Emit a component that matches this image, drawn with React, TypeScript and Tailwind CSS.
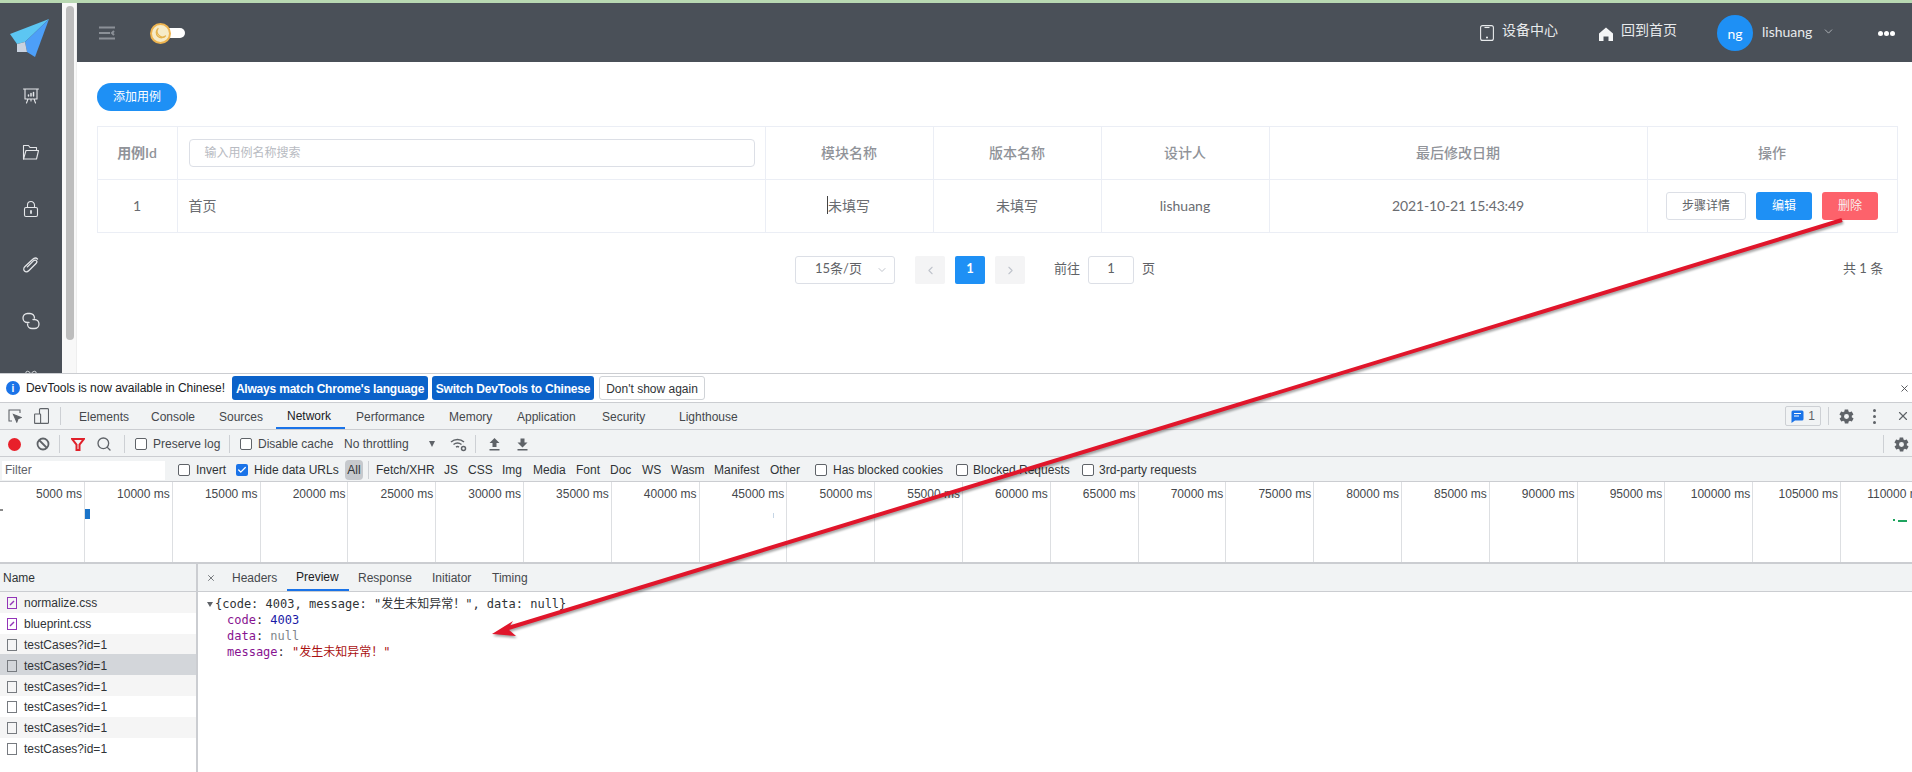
import { Check, ChevronDown, ChevronLeft, ChevronRight, Gift, Search, X } from "lucide-react";

const devFont = "font-['Liberation_Sans',Arial,sans-serif]";
const appFont = "font-['Lato','Noto_Sans_CJK_SC',sans-serif]";

const devTabs = [
  { label: "Elements", width: "w-[72px]" },
  { label: "Console", width: "w-[68px]" },
  { label: "Sources", width: "w-[68px]" },
  { label: "Network", width: "w-[69px]", active: true },
  { label: "Performance", width: "w-[93px]" },
  { label: "Memory", width: "w-[68px]" },
  { label: "Application", width: "w-[85px]" },
  { label: "Security", width: "w-[77px]" },
  { label: "Lighthouse", width: "w-[90px]" },
];

const filterTypes = [
  { label: "Fetch/XHR", width: "w-[68px]" },
  { label: "JS", width: "w-[24px]" },
  { label: "CSS", width: "w-[34px]" },
  { label: "Img", width: "w-[31px]" },
  { label: "Media", width: "w-[43px]" },
  { label: "Font", width: "w-[34px]" },
  { label: "Doc", width: "w-[32px]" },
  { label: "WS", width: "w-[29px]" },
  { label: "Wasm", width: "w-[43px]" },
  { label: "Manifest", width: "w-[56px]" },
  { label: "Other", width: "w-[45px]" },
];

const ticks = [
  "5000", "10000", "15000", "20000", "25000", "30000", "35000", "40000", "45000", "50000", "55000",
  "60000", "65000", "70000", "75000", "80000", "85000", "90000", "95000", "100000", "105000", "110000",
];

const requests = [
  { name: "normalize.css", css: true, bg: "bg-[#f5f5f5]" },
  { name: "blueprint.css", css: true, bg: "bg-white" },
  { name: "testCases?id=1", bg: "bg-[#f5f5f5]" },
  { name: "testCases?id=1", bg: "bg-[#d3d6da]" },
  { name: "testCases?id=1", bg: "bg-[#f5f5f5]" },
  { name: "testCases?id=1", bg: "bg-white" },
  { name: "testCases?id=1", bg: "bg-[#f5f5f5]" },
  { name: "testCases?id=1", bg: "bg-white" },
];

function Logo() {
  return (
    <svg width="42" height="42" viewBox="1 0 42 42">
      <path d="M1 17 L40 2 L16 25 L8 27 Z" fill="#5cc6f2" />
      <path d="M40 2 L16 25 L18 35 L26 40 Z" fill="#4d9ff8" />
      <path d="M8 27 L16 25 L18 35 L8 35 Z" fill="#c9d2df" />
    </svg>
  );
}

function SideIcon({ children }: { children: React.ReactNode }) {
  return (
    <div className="h-[56.3px] shrink-0 flex items-center justify-center">
      <svg width="18" height="18" viewBox="0 0 18 18" fill="none" stroke="#e4e6e9" strokeWidth="1.1" strokeLinecap="round" strokeLinejoin="round">
        {children}
      </svg>
    </div>
  );
}

function DevCheckbox({ checked, className = "" }: { checked?: boolean; className?: string }) {
  return checked ? (
    <span className={`w-[12px] h-[12px] rounded-[2px] bg-[#1a73e8] flex items-center justify-center shrink-0 ${className}`}>
      <Check size={10} strokeWidth={3} color="white" />
    </span>
  ) : (
    <span className={`w-[12px] h-[12px] rounded-[2px] border border-[#5f6368] bg-white shrink-0 ${className}`} />
  );
}

function Sep({ className = "" }: { className?: string }) {
  return <span className={`w-px h-[18px] bg-[#cdd0d4] shrink-0 ${className}`} />;
}

function Gear({ className }: { className?: string }) {
  return (
    <svg className={className} width="17" height="17" viewBox="0 0 24 24" fill="#5f6368">
      <path d="M19.4 13c.1-.3.1-.7.1-1s0-.7-.1-1l2.1-1.6c.2-.2.2-.4.1-.6l-2-3.5c-.1-.2-.4-.3-.6-.2l-2.5 1c-.5-.4-1.1-.7-1.7-1l-.4-2.6c0-.3-.2-.4-.5-.4h-4c-.3 0-.5.2-.5.4l-.4 2.6c-.6.3-1.2.6-1.7 1l-2.5-1c-.2-.1-.5 0-.6.2l-2 3.5c-.1.2-.1.5.1.6L4.6 11c-.1.3-.1.7-.1 1s0 .7.1 1l-2.1 1.6c-.2.2-.2.4-.1.6l2 3.5c.1.2.4.3.6.2l2.5-1c.5.4 1.1.7 1.7 1l.4 2.6c0 .2.2.4.5.4h4c.3 0 .5-.2.5-.4l.4-2.6c.6-.3 1.2-.6 1.7-1l2.5 1c.2.1.5 0 .6-.2l2-3.5c.1-.2.1-.5-.1-.6L19.4 13zM12 15.5a3.5 3.5 0 1 1 0-7 3.5 3.5 0 0 1 0 7z" />
    </svg>
  );
}

function Sidebar() {
  return (
    <aside className="w-[62px] shrink-0 h-full bg-[#4a5058] flex flex-col items-center overflow-hidden">
      <div className="h-[65px] shrink-0 pt-[14px]">
        <Logo />
      </div>
      <SideIcon>
        <path d="M1.500 2h15M3 2v10h12V2M6 12l-1.500 4M12 12l1.500 4M9 12v2" />
        <path d="M6.500 9V8M9 9V6.500M11.500 9V5.500" strokeWidth="1.500" />
      </SideIcon>
      <SideIcon>
        <path d="M1.500 16V2.500h5l1.500 2h6.500v3" />
        <path d="M1.500 16l2.500-8.500h12.500l-2 8.500z" />
      </SideIcon>
      <SideIcon>
        <rect x="2.500" y="7.500" width="13" height="9" rx="1.500" />
        <path d="M5.500 7.500V5a3.500 3.500 0 0 1 7 0v2.500" />
        <path d="M9 11v2" strokeWidth="1.800" />
      </SideIcon>
      <SideIcon>
        <path d="M15.500 3c-1.500-1.500-3.500-1-5 .5L3 10.500c-1.500 1.500-1.500 3.500-.5 4.500s3 1 4.500-.5l7-7c1-1 1-2.200.3-2.900s-1.900-.7-2.900.3l-6 6" strokeWidth="1.300" />
      </SideIcon>
      <SideIcon>
        <path d="M7 10.500H5.500a4.500 4.500 0 0 1 0-9H8a4.500 4.500 0 0 1 4.500 4.500" strokeWidth="1.300" />
        <path d="M11 7.500h1.500a4.500 4.500 0 0 1 0 9H10A4.500 4.500 0 0 1 5.500 12" strokeWidth="1.300" />
      </SideIcon>
      <div className="h-[56.3px] shrink-0 flex items-center justify-center">
        <Gift size={18} color="#e4e6e9" strokeWidth={1.2} />
      </div>
    </aside>
  );
}

function Header() {
  return (
    <header className="h-[59px] shrink-0 bg-[#4a5058] flex items-center text-[#e8eaec] text-[14px] pt-px">
      <svg className="ml-[22px]" width="16" height="14" viewBox="0 0 16 14" fill="none" stroke="#8b9097" strokeWidth="2">
        <path d="M0 1.500h16M0 7h11M0 12.500h16M15 5l-2 2 2 2" />
      </svg>
      <div className="ml-[35px] relative w-[35px] h-[21px] flex items-center">
        <span className="ml-[8px] w-[27px] h-[10px] rounded-full bg-white" />
        <span className="absolute left-0 top-0 w-[21px] h-[21px] rounded-full bg-[#f6ecc9] border-2 border-[#eeb44f] flex items-center justify-center">
          <svg width="13" height="13" viewBox="0 0 12 12" fill="none" stroke="#e5b34e" strokeWidth="1">
            <path d="M4 1a5 5 0 1 0 7 7 5 5 0 0 1-7-7z" />
          </svg>
        </span>
      </div>
      <svg className="ml-[1295px] mb-[1px]" width="14" height="16" viewBox="0 0 14 16" fill="none" stroke="#e8eaec" strokeWidth="1.1">
        <rect x="0.600" y="0.600" width="12.800" height="14.800" rx="2" />
        <path d="M4.500 2.500h5" />
        <circle cx="7" cy="12.500" r="0.500" fill="#e8eaec" />
      </svg>
      <span className="ml-[8px] w-[56px] mb-[7px] leading-none whitespace-nowrap">设备中心</span>
      <svg className="ml-[41px] mb-[-2px]" width="14" height="14" viewBox="0 0 14 14" fill="#f4f5f6">
        <path d="M7 0.500L14 6.500V14H9.500V9.500h-5V14H0V6.500z" />
      </svg>
      <span className="ml-[8px] w-[56px] mb-[7px] leading-none whitespace-nowrap">回到首页</span>
      <span className="ml-[40px] w-[36px] h-[36px] rounded-full bg-[#1e90f5] flex items-center justify-center text-white">ng</span>
      <span className="ml-[9px] w-[52px] mb-[4px]">lishuang</span>
      <ChevronDown className="ml-[8px] mb-[4px]" size={13} color="#c8ccd0" strokeWidth={1.4} />
      <span className="ml-[43px] flex gap-[1px]">
        <i className="w-[5px] h-[5px] rounded-full bg-white" />
        <i className="w-[5px] h-[5px] rounded-full bg-white" />
        <i className="w-[5px] h-[5px] rounded-full bg-white" />
      </span>
    </header>
  );
}

function CasesTable() {
  const head = "border border-[#ebeef5] text-center text-[#909399] text-[14px] font-medium pb-[2px]";
  const cell = "border border-[#ebeef5] text-center text-[#6a6c71] text-[14px] pb-[2px]";
  return (
    <table className="ml-[19.500px] mt-[15px] w-[1800px] table-fixed border-collapse">
      <colgroup>
        <col className="w-[80px]" />
        <col className="w-[588px]" />
        <col className="w-[168px]" />
        <col className="w-[168px]" />
        <col className="w-[168px]" />
        <col className="w-[378px]" />
        <col className="w-[250px]" />
      </colgroup>
      <thead>
        <tr className="h-[53px]">
          <th className={`${head} font-semibold`}>用例Id</th>
          <th className="border border-[#ebeef5] px-[11px] font-normal">
            <div className="w-[566px] h-[28px] rounded-[4px] border border-[#dcdfe6] flex items-center pl-[15px] text-[12px] text-[#b8bbc2]">
              输入用例名称搜索
            </div>
          </th>
          <th className={head}>模块名称</th>
          <th className={head}>版本名称</th>
          <th className={head}>设计人</th>
          <th className={head}>最后修改日期</th>
          <th className={head}>操作</th>
        </tr>
      </thead>
      <tbody>
        <tr className="h-[53px]">
          <td className={cell}>1</td>
          <td className={`${cell} text-left! px-[11px]`}>首页</td>
          <td className={cell}>
            <span className="relative">
              <i className="absolute left-[-1px] top-[-1px] w-px h-[18px] bg-[#444]" />
              未填写
            </span>
          </td>
          <td className={cell}>未填写</td>
          <td className={cell}>lishuang</td>
          <td className={`${cell} tracking-[-0.15px]`}>2021-10-21 15:43:49</td>
          <td className="border border-[#ebeef5]">
            <div className="flex justify-center gap-[10px] text-[12px]">
              <span className="w-[80px] h-[28px] rounded-[3px] border border-[#dcdfe6] bg-white text-[#606266] flex items-center justify-center">步骤详情</span>
              <span className="w-[56px] h-[28px] rounded-[3px] bg-[#1e90f5] text-white flex items-center justify-center">编辑</span>
              <span className="w-[56px] h-[28px] rounded-[3px] bg-[#fd626b] text-[#f8f0f0] flex items-center justify-center">删除</span>
            </div>
          </td>
        </tr>
      </tbody>
    </table>
  );
}

function Pagination() {
  return (
    <div className="mt-[23px] h-[28px] flex items-center text-[13px] text-[#606266]">
      <div className="ml-[718px] w-[100px] h-[28px] rounded-[3px] border border-[#dcdfe6] flex items-center pl-[19px] pb-[2px] whitespace-nowrap">
        15条/页
        <ChevronDown className="ml-[14px] mt-[2px]" size={12} color="#c0c4cc" />
      </div>
      <span className="ml-[20px] w-[30px] h-[28px] rounded-[2px] bg-[#f4f4f5] flex items-center justify-center">
        <ChevronLeft size={13} color="#c0c4cc" />
      </span>
      <span className="ml-[10px] w-[30px] h-[28px] rounded-[2px] bg-[#1e90f5] text-white font-bold flex items-center justify-center pb-[2px]">1</span>
      <span className="ml-[10px] w-[30px] h-[28px] rounded-[2px] bg-[#f4f4f5] flex items-center justify-center">
        <ChevronRight size={13} color="#c0c4cc" />
      </span>
      <span className="ml-[29px] w-[26px] pb-[2px] whitespace-nowrap">前往</span>
      <span className="ml-[8px] w-[46px] h-[28px] rounded-[3px] border border-[#dcdfe6] flex items-center justify-center pb-[2px]">1</span>
      <span className="ml-[8px] pb-[2px]">页</span>
      <span className="ml-[688px] pb-[2px] whitespace-nowrap">共 1 条</span>
    </div>
  );
}

function AppArea() {
  return (
    <div className={`h-[370px] shrink-0 flex overflow-hidden ${appFont}`}>
      <Sidebar />
      <div className="w-[15px] shrink-0 bg-[#f8f8f8] border-r border-[#eeeeee] pt-[3px] pl-[4px]">
        <div className="w-[8px] h-[334px] rounded-full bg-[#bdbdbd]" />
      </div>
      <main className="flex-1 min-w-0 flex flex-col bg-white">
        <Header />
        <button className="ml-[20px] mt-[21px] w-[80px] h-[28px] rounded-full bg-[#1e90f5] text-white text-[12px]">添加用例</button>
        <CasesTable />
        <Pagination />
      </main>
    </div>
  );
}

function InfoBar() {
  return (
    <div className="h-[30px] shrink-0 border-t border-b border-[#cbcdd1] bg-white flex items-center text-[12px] text-[#202124]">
      <span className="ml-[6px] w-[14px] h-[14px] rounded-full bg-[#1a73e8] text-white text-[10px] font-bold flex items-center justify-center">i</span>
      <span className="ml-[6px] w-[206px] whitespace-nowrap tracking-[-0.05px]">DevTools is now available in Chinese!</span>
      <span className="w-[196px] h-[24px] rounded-[3px] bg-[#0b62c9] text-white font-bold pt-[2px] tracking-[-0.2px] flex items-center justify-center whitespace-nowrap">Always match Chrome's language</span>
      <span className="ml-[4px] w-[162px] h-[24px] rounded-[3px] bg-[#0b62c9] text-white font-bold pt-[2px] tracking-[-0.2px] flex items-center justify-center whitespace-nowrap">Switch DevTools to Chinese</span>
      <span className="ml-[5px] w-[106px] h-[24px] rounded-[3px] border border-[#d0d3d7] text-[#303336] pt-[2px] flex items-center justify-center whitespace-nowrap">Don't show again</span>
      <X className="ml-auto mr-[2px]" size={11} color="#4a4d51" />
    </div>
  );
}

function TabBar() {
  return (
    <div className="h-[27px] shrink-0 bg-[#f1f3f4] border-b border-[#cbcdd1] flex items-center text-[12px] text-[#45484c]">
      <svg className="ml-[8px]" width="14" height="14" viewBox="0 0 14 14" fill="none" stroke="#5f6368" strokeWidth="1.100">
        <path d="M4 12H1V1h11v3" />
        <path d="M5.500 5.500l7.500 3-3 1.200-1.200 3.300z" fill="#5f6368" />
      </svg>
      <svg className="ml-[12px]" width="15" height="16" viewBox="0 0 15 16" fill="none" stroke="#5f6368" strokeWidth="1.100">
        <rect x="5.500" y="0.600" width="9" height="14.800" rx="1" />
        <rect x="0.600" y="6" width="6" height="9.400" rx="0.500" fill="#f1f3f4" />
      </svg>
      <Sep className="ml-[11px] mr-[7px]" />
      {devTabs.map((tab) => (
        <span
          key={tab.label}
          className={`${tab.width} h-full pl-[11px] pt-[2px] flex items-center whitespace-nowrap ${tab.active ? "border-b-2 border-[#1a73e8] text-[#202124]" : ""}`}
        >
          {tab.label}
        </span>
      ))}
      <span className="ml-auto w-[36px] h-[20px] rounded-[2px] border border-[#cdd0d4] flex items-center justify-center gap-[4px] text-[#5f6368]">
        <svg width="13" height="13" viewBox="0 0 13 13">
          <path d="M2 0.500h9a1.500 1.500 0 0 1 1.500 1.500v7A1.500 1.500 0 0 1 11 10.500H4L0.500 13V2A1.500 1.500 0 0 1 2 0.500z" fill="#1a73e8" />
          <path d="M3 3.500h7M3 6h5" stroke="white" />
        </svg>
        1
      </span>
      <Sep className="ml-[7px]" />
      <Gear className="ml-[9px]" />
      <span className="ml-[18px] flex flex-col gap-[3px]">
        <i className="w-[3px] h-[3px] rounded-full bg-[#5f6368]" />
        <i className="w-[3px] h-[3px] rounded-full bg-[#5f6368]" />
        <i className="w-[3px] h-[3px] rounded-full bg-[#5f6368]" />
      </span>
      <X className="ml-[20px] mr-[2px]" size={14} color="#5f6368" />
    </div>
  );
}

function NetworkToolbar() {
  return (
    <div className="h-[27px] shrink-0 bg-[#f1f3f4] border-b border-[#cbcdd1] pt-[2px] flex items-center text-[12px] text-[#45484c]">
      <span className="ml-[8px] w-[13px] h-[13px] rounded-full bg-[#e8202a]" />
      <svg className="ml-[15px]" width="14" height="14" viewBox="0 0 14 14" fill="none" stroke="#5f6368" strokeWidth="1.800">
        <circle cx="7" cy="7" r="5.500" />
        <path d="M3 3l8 8" />
      </svg>
      <Sep className="ml-[9px]" />
      <svg className="ml-[11px]" width="14" height="13" viewBox="0 0 14 13" fill="none" stroke="#e0202a" strokeWidth="2">
        <path d="M1 1h12L8.500 6.500V12h-3V6.500z" />
      </svg>
      <Search className="ml-[11px]" size={16} color="#5f6368" />
      <Sep className="ml-[12px]" />
      <DevCheckbox className="ml-[10px]" />
      <span className="ml-[6px] w-[76px] whitespace-nowrap">Preserve log</span>
      <Sep />
      <DevCheckbox className="ml-[10px]" />
      <span className="ml-[6px] w-[86px] whitespace-nowrap">Disable cache</span>
      <span className="w-[66px] whitespace-nowrap">No throttling</span>
      <span className="ml-[19px] w-0 h-0 border-x-[3.500px] border-x-transparent border-t-[6px] border-t-[#5f6368]" />
      <svg className="ml-[15px]" width="17" height="15" viewBox="0 0 17 15" fill="none" stroke="#5f6368" strokeWidth="1.500">
        <path d="M1 5a10 10 0 0 1 13 0M3.500 7.500a6.500 6.500 0 0 1 8 0M6 10a3 3 0 0 1 3 0" />
        <circle cx="13.500" cy="11.500" r="2" />
      </svg>
      <Sep className="ml-[8px]" />
      <svg className="ml-[13px]" width="11" height="13" viewBox="0 0 11 13" fill="#5f6368">
        <path d="M5.500 0L10.500 5H7.500V9H3.500V5H0.500z" />
        <rect x="0.500" y="11" width="10" height="1.500" />
      </svg>
      <svg className="ml-[17px]" width="11" height="13" viewBox="0 0 11 13" fill="#5f6368">
        <path d="M5.500 9.500L0.500 4.500H3.500V0.500H7.500V4.500H10.500z" />
        <rect x="0.500" y="11" width="10" height="1.500" />
      </svg>
      <Sep className="ml-auto" />
      <Gear className="ml-[9px] mr-[2px]" />
    </div>
  );
}

function FilterBar() {
  return (
    <div className="h-[25px] shrink-0 bg-[#f1f3f4] border-b border-[#cbcdd1] pt-[2px] flex items-center text-[12px] text-[#303336]">
      <span className="ml-[2px] w-[163px] h-[19px] bg-white pl-[3px] flex items-center text-[#5f6368]">Filter</span>
      <DevCheckbox className="ml-[13px]" />
      <span className="ml-[6px] w-[40px]">Invert</span>
      <DevCheckbox checked />
      <span className="ml-[6px] w-[91px] whitespace-nowrap">Hide data URLs</span>
      <span className="w-[18px] h-[20px] rounded-[4px] bg-[#c6c9cd] flex items-center justify-center">All</span>
      <Sep className="ml-[5px] mr-[7px]" />
      {filterTypes.map((type) => (
        <span key={type.label} className={`${type.width} whitespace-nowrap`}>{type.label}</span>
      ))}
      <DevCheckbox />
      <span className="ml-[6px] w-[123px] whitespace-nowrap">Has blocked cookies</span>
      <DevCheckbox />
      <span className="ml-[5px] w-[109px] whitespace-nowrap">Blocked Requests</span>
      <DevCheckbox />
      <span className="ml-[5px] whitespace-nowrap">3rd-party requests</span>
    </div>
  );
}

function Timeline() {
  return (
    <div className="relative h-[81px] shrink-0 bg-white border-b border-[#cbcdd1] flex overflow-hidden text-[12px] text-[#45484c]">
      <div className="w-[85px] shrink-0 border-r border-[#dddfe2] text-right pr-[2px] pt-[3px]">5000 ms</div>
      {ticks.slice(1).map((tick) => (
        <div key={tick} className="w-[87.8px] shrink-0 border-r border-[#dddfe2] text-right pr-[2px] pt-[3px] whitespace-nowrap">
          {tick} ms
        </div>
      ))}
      <i className="absolute left-0 top-[27px] w-[3px] h-[2px] bg-[#8a8a8a]" />
      <i className="absolute left-[85px] top-[27px] w-[5px] h-[10px] bg-[#1a73c8]" />
      <i className="absolute left-[773px] top-[31px] w-px h-[5px] bg-[#c5d5e5]" />
      <i className="absolute left-[1898px] top-[38px] w-[9px] h-[2px] bg-[#1fa45f]" />
      <i className="absolute left-[1893px] top-[37px] w-[2px] h-[2px] bg-[#1fa45f]" />
    </div>
  );
}

function RequestList() {
  return (
    <div className="w-[198px] shrink-0 h-full border-r-2 border-[#cbcdd1] text-[12px] text-[#303336] overflow-hidden">
      <div className="h-[28px] bg-[#f1f3f4] border-b border-[#cbcdd1] flex items-center pl-[3px]">Name</div>
      {requests.map((request, i) => (
        <div key={i} className={`h-[20.8px] pt-[2px] flex items-center pl-[7px] ${request.bg}`}>
          <span className={`w-[10px] h-[12px] border shrink-0 flex items-center justify-center ${request.css ? "border-[#9334b8]" : "border-[#777b80]"}`}>
            {request.css && (
              <svg width="6" height="6" viewBox="0 0 6 6">
                <path d="M1 5l4-4" stroke="#9334b8" strokeWidth="1.500" />
              </svg>
            )}
          </span>
          <span className="ml-[7px] whitespace-nowrap">{request.name}</span>
        </div>
      ))}
    </div>
  );
}

function PreviewPane() {
  return (
    <div className="flex-1 min-w-0 h-full bg-white">
      <div className="h-[28px] bg-[#f1f3f4] border-b border-[#cbcdd1] flex items-center text-[12px] text-[#45484c]">
        <X className="ml-[8px]" size={10} color="#5f6368" />
        <span className="ml-[16px] w-[55px]">Headers</span>
        <span className="w-[62px] h-full pl-[9px] flex items-center border-b-2 border-[#1a73e8] text-[#202124]">Preview</span>
        <span className="ml-[9px] w-[74px]">Response</span>
        <span className="w-[60px]">Initiator</span>
        <span>Timing</span>
      </div>
      <div className="pt-[4px] pl-[9px] font-['DejaVu_Sans_Mono','Noto_Sans_CJK_SC',monospace] text-[12px] leading-[16px] text-[#303336]">
        <div className="flex items-center">
          <span className="w-0 h-0 border-x-[3px] border-x-transparent border-t-[5px] border-t-[#5f6368] mr-[2px]" />
          <span className="whitespace-nowrap">{'{code: 4003, message: "发生未知异常！", data: null}'}</span>
        </div>
        <div className="pl-[20px]">
          <span className="text-[#881391]">code</span>: <span className="text-[#1a1aa6]">4003</span>
        </div>
        <div className="pl-[20px]">
          <span className="text-[#881391]">data</span>: <span className="text-[#80868b]">null</span>
        </div>
        <div className="pl-[20px] whitespace-nowrap">
          <span className="text-[#881391]">message</span>: <span className="text-[#aa1111]">"发生未知异常！"</span>
        </div>
      </div>
    </div>
  );
}

function Arrow() {
  return (
    <svg className="absolute inset-0 pointer-events-none drop-shadow-[1px_2px_1px_rgba(0,0,0,0.35)]" width="1912" height="772" viewBox="0 0 1912 772">
      <path d="M1842 220 L505 629" stroke="#e0162b" strokeWidth="4" fill="none" />
      <path d="M492 634 L513 621 L508 629 L516 636 Z" fill="#e0162b" />
    </svg>
  );
}

export default function App() {
  return (
    <div className="relative w-[1912px] h-[772px] overflow-hidden bg-white flex flex-col">
      <div className="h-[3px] shrink-0 bg-[#b8d8b2]" />
      <AppArea />
      <div className={`flex-1 min-h-0 flex flex-col ${devFont}`}>
        <InfoBar />
        <TabBar />
        <NetworkToolbar />
        <FilterBar />
        <Timeline />
        <div className="flex-1 min-h-0 flex border-t border-[#cbcdd1]">
          <RequestList />
          <PreviewPane />
        </div>
      </div>
      <Arrow />
    </div>
  );
}
